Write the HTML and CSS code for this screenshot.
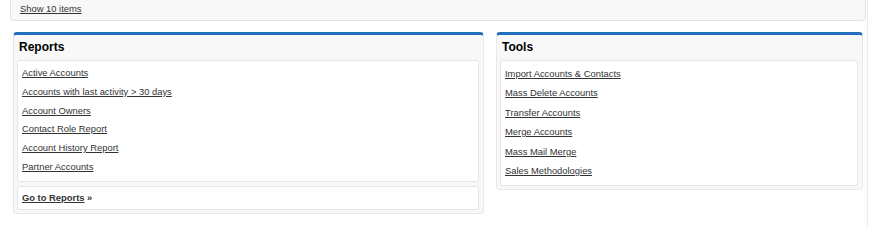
FILE: index.html
```html
<!DOCTYPE html>
<html>
<head>
    <meta charset="UTF-8">
    <link rel="stylesheet" href="styles.css">
</head>
<body>
    <div class="page">
        <div class="show-more">
            <a href="#">Show 10 items</a>
        </div>

        <div class="columns">
            <div class="panel reports">
                <h3>Reports</h3>
                <ul class="box">
                    <li><a href="#">Active Accounts</a></li>
                    <li><a href="#">Accounts with last activity &gt; 30 days</a></li>
                    <li><a href="#">Account Owners</a></li>
                    <li><a href="#">Contact Role Report</a></li>
                    <li><a href="#">Account History Report</a></li>
                    <li><a href="#">Partner Accounts</a></li>
                </ul>
                <div class="box go-to">
                    <a href="#">Go to Reports</a> &raquo;
                </div>
            </div>

            <div class="panel tools">
                <h3>Tools</h3>
                <ul class="box">
                    <li><a href="#">Import Accounts &amp; Contacts</a></li>
                    <li><a href="#">Mass Delete Accounts</a></li>
                    <li><a href="#">Transfer Accounts</a></li>
                    <li><a href="#">Merge Accounts</a></li>
                    <li><a href="#">Mass Mail Merge</a></li>
                    <li><a href="#">Sales Methodologies</a></li>
                </ul>
            </div>
        </div>
    </div>
</body>
</html>
```

FILE: styles.css
```css
body {
    margin: 0;
    font-family: "Liberation Sans", Arial, sans-serif;
    font-size: 9.4px;
    color: #333;
    background: white;
}
a {
    color: #333;
    text-decoration: underline;
}
.page {
    width: 857px;
    min-height: 228px;
    padding-left: 10px;
    border-right: 1px solid #ececec;
}
.show-more {
    height: 20px;
    margin-right: 1px;
    padding-left: 9px;
    line-height: 18px;
    background: #f8f8f8;
    border: 1px solid #e3e3e3;
    border-top: none;
    border-radius: 0 0 4px 4px;
}
.columns {
    display: flex;
    align-items: flex-start;
    gap: 12px;
    margin: 11px 4px 0 3px;
}
.panel {
    background: #f8f8f8;
    border: 1px solid #e8e8e8;
    border-top: 3px solid #236fbd;
    border-radius: 4px;
    padding: 0 4px 3px 3px;
}
.panel.reports {
    width: 462px;
}
.panel.tools {
    flex: 1;
}
.panel h3 {
    margin: 0;
    height: 25px;
    line-height: 25px;
    padding-left: 2px;
    font-size: 12px;
    font-weight: bold;
    color: #000;
}
.box {
    margin: 0;
    list-style: none;
    background: white;
    border: 1px solid #e6e6e6;
    border-radius: 2px;
    padding: 3px 4px 4px;
}
.box li {
    height: 18.8px;
    line-height: 18.8px;
}
.tools .box {
    padding-top: 3px;
    padding-bottom: 5px;
}
.tools .box li {
    height: 19.4px;
    line-height: 19.4px;
}
.go-to {
    margin-top: 4px;
    height: 22px;
    line-height: 22px;
    padding-top: 0;
    padding-bottom: 0;
    font-weight: bold;
}
```
